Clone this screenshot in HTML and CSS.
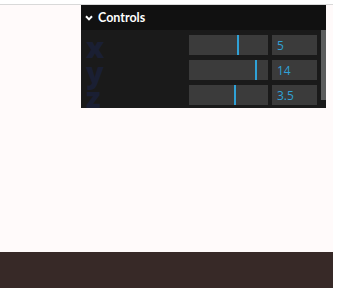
FILE: index.html
```html
<!DOCTYPE html>
<html>
<head>
<meta charset="utf-8">
<link rel="stylesheet" href="styles.css">
</head>
<body>
<div class="page">
  <div class="topbar"></div>
  <div class="stage"></div>
  <div class="floor"></div>
</div>
<div class="gui">
  <div class="gui-head">
    <svg class="chev" width="8" height="6" viewBox="0 0 8 6"><path d="M1 1.2 L4 4.4 L7 1.2" fill="none" stroke="#fff" stroke-width="2"/></svg>
    <span>Controls</span>
  </div>
  <div class="gui-body">
    <div class="rows">
      <div class="row">
        <div class="label">x</div>
        <div class="slider"><i class="mark" style="left:48px"></i></div>
        <div class="num">5</div>
      </div>
      <div class="row">
        <div class="label">y</div>
        <div class="slider"><i class="mark" style="left:66px"></i></div>
        <div class="num">14</div>
      </div>
      <div class="row">
        <div class="label">z</div>
        <div class="slider"><i class="mark" style="left:45px"></i></div>
        <div class="num">3.5</div>
      </div>
    </div>
    <div class="scroll"><div class="thumb"></div></div>
  </div>
</div>
</body>
</html>
```
FILE: styles.css
```css
html, body { margin: 0; padding: 0; }
body { width: 339px; height: 288px; overflow: hidden; background: #ffffff; font-family: "Open Sans", "Noto Sans", sans-serif; position: relative; }
.page { width: 333px; height: 288px; display: flex; flex-direction: column; }
.topbar { height: 4px; background: #ffffff; border-bottom: 1px solid #d9d9d9; }
.stage { height: 247px; background: #fffafa; }
.floor { flex: 1; background: #372927; }
.gui { position: absolute; left: 81px; top: 5px; width: 245px; height: 103px; background: #1a1a1a; overflow: hidden; }
.gui-head { height: 25px; background: #111111; display: flex; align-items: center; gap: 5px; padding-left: 4px; color: #fff; font-family: Lato, "Open Sans", sans-serif; font-size: 12.5px; font-weight: 700; }
.gui-body { display: flex; padding-top: 5px; }
.rows { display: flex; flex-direction: column; gap: 5px; width: 236px; }
.row { display: flex; height: 20px; align-items: stretch; }
.label { width: 108px; font-family: "Open Sans", "DejaVu Sans", sans-serif; font-weight: 800; font-size: 29px; line-height: 24px; color: #1a1f33; padding-left: 5px; box-sizing: border-box; }
.slider { width: 79px; background: #3b3b3b; position: relative; }
.mark { position: absolute; top: 0; width: 2px; height: 20px; background: #2fa1d6; }
.num { width: 45px; margin-left: 4px; background: #3b3b3b; color: #2fa1d6; font-size: 12px; line-height: 21px; padding-left: 5px; box-sizing: border-box; }
.scroll { width: 5px; margin-left: 4px; margin-top: -5px; }
.thumb { width: 5px; height: 70px; background: #5c5c5c; }
```
